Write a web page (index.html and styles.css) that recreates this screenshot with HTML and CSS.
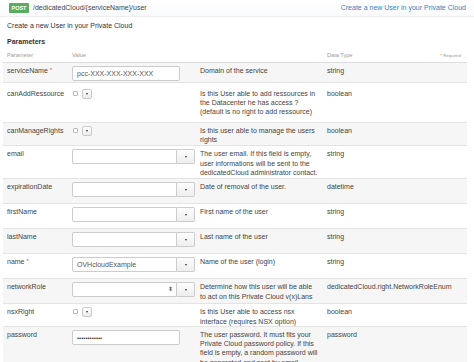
FILE: index.html
```html
<!DOCTYPE html>
<html>
<head>
  <meta name="viewport" content="width=device-width, initial-scale=1.0">
  <title>POST /dedicatedCloud/{serviceName}/user</title>
  <link rel="stylesheet" href="styles.css">
</head>
<body>
  <div class="op-bar">
    <span class="verb">POST</span>
    <span class="path">/dedicatedCloud/{serviceName}/user</span>
    <a class="op-link" href="#">Create a new User in your Private Cloud</a>
  </div>

  <div class="op-body">
    <p class="summary">Create a new User in your Private Cloud</p>
    <h4>Parameters</h4>

    <table class="params">
      <colgroup>
        <col class="c-name">
        <col class="c-value">
        <col class="c-desc">
        <col class="c-type">
      </colgroup>
      <thead>
        <tr>
          <th>Parameter</th>
          <th>Value</th>
          <th></th>
          <th>Data Type <span class="req"><b>*</b> Required</span></th>
        </tr>
      </thead>
      <tbody>
        <tr>
          <td>serviceName <b class="star">*</b></td>
          <td><div class="field field-short">pcc-XXX-XXX-XXX-XXX</div></td>
          <td>Domain of the service</td>
          <td>string</td>
        </tr>
        <tr class="tall">
          <td>canAddRessource</td>
          <td><span class="check"></span><span class="mini-btn"><i class="caret"></i></span></td>
          <td>Is this User able to add ressources in the Datacenter he has access ? (default is no right to add ressource)</td>
          <td>boolean</td>
        </tr>
        <tr>
          <td>canManageRights</td>
          <td><span class="check"></span><span class="mini-btn"><i class="caret"></i></span></td>
          <td>Is this user able to manage the users rights</td>
          <td>boolean</td>
        </tr>
        <tr>
          <td>email</td>
          <td><div class="group"><div class="field"></div><span class="drop"><i class="caret"></i></span></div></td>
          <td>The user email. If this field is empty, user informations will be sent to the dedicatedCloud administrator contact.</td>
          <td>string</td>
        </tr>
        <tr>
          <td>expirationDate</td>
          <td><div class="group"><div class="field"></div><span class="drop"><i class="caret"></i></span></div></td>
          <td>Date of removal of the user.</td>
          <td>datetime</td>
        </tr>
        <tr>
          <td>firstName</td>
          <td><div class="group"><div class="field"></div><span class="drop"><i class="caret"></i></span></div></td>
          <td>First name of the user</td>
          <td>string</td>
        </tr>
        <tr>
          <td>lastName</td>
          <td><div class="group"><div class="field"></div><span class="drop"><i class="caret"></i></span></div></td>
          <td>Last name of the user</td>
          <td>string</td>
        </tr>
        <tr>
          <td>name <b class="star">*</b></td>
          <td><div class="group"><div class="field">OVHcloudExample</div><span class="drop"><i class="caret"></i></span></div></td>
          <td>Name of the user (login)</td>
          <td>string</td>
        </tr>
        <tr>
          <td>networkRole</td>
          <td><div class="group"><div class="field field-select"><span class="updown">&#x2B0D;</span></div><span class="drop"><i class="caret"></i></span></div></td>
          <td>Determine how this user will be able to act on this Private Cloud v(x)Lans</td>
          <td>dedicatedCloud.right.NetworkRoleEnum</td>
        </tr>
        <tr class="short">
          <td>nsxRight</td>
          <td><span class="check"></span><span class="mini-btn"><i class="caret"></i></span></td>
          <td>Is this User able to access nsx interface (requires NSX option)</td>
          <td>boolean</td>
        </tr>
        <tr>
          <td>password</td>
          <td><div class="field field-short"><span class="dots">&bull;&bull;&bull;&bull;&bull;&bull;&bull;&bull;&bull;&bull;&bull;&bull;</span></div></td>
          <td>The user password. It must fits your Private Cloud password policy. If this field is empty, a random password will be generated and sent by email.</td>
          <td>password</td>
        </tr>
      </tbody>
    </table>
  </div>
</body>
</html>
```

FILE: styles.css
```css
html {
  background-color: #ffffff;
}
body {
  margin: 0;
  font-family: "Liberation Sans", Arial, Helvetica, sans-serif;
  font-size: 7px;
  line-height: 9.3px;
  color: #333333;
  overflow: hidden;
}

/* operation bar */
.op-bar {
  display: flex;
  align-items: center;
  height: 16px;
  padding: 0 8px 0 9px;
  background: linear-gradient(#ffffff, #f9fafb);
  border-bottom: 1px solid #eceef0;
}
.verb {
  width: 20px;
  height: 10px;
  line-height: 10px;
  margin-right: 4px;
  text-align: center;
  font-size: 5.5px;
  font-weight: bold;
  color: #ffffff;
  background-color: #58ad62;
  border-radius: 1px;
}
.path {
  color: #444444;
}
.op-link {
  margin-left: auto;
  color: #3a84c2;
  text-decoration: none;
}

/* body */
.op-body {
  padding: 0 7px 0 3px;
}
.summary {
  margin: 4px 0 0 4px;
}
h4 {
  margin: 7px 0 0 4px;
  font-size: 7px;
  font-weight: bold;
  color: #333333;
}

/* parameters table */
.params {
  width: 464px;
  margin-top: 1px;
  border-collapse: collapse;
  table-layout: fixed;
}
.c-name { width: 65px; }
.c-value { width: 128px; }
.c-desc { width: 127px; }
.c-type { width: 144px; }

.params th {
  padding: 3px 4px 2px;
  font-size: 5.6px;
  font-weight: normal;
  text-align: left;
  color: #9a9a9a;
  border-bottom: 1px solid #dddddd;
}
.req {
  float: right;
  margin-right: 2px;
  font-size: 4.4px;
  color: #9a9a9a;
}
.req b {
  font-weight: normal;
  color: #d9534f;
}
.params td {
  padding: 3px 4px 1px;
  vertical-align: top;
  color: #444444;
  border-bottom: 1px solid #e4e4e4;
}
.params td:nth-child(2) {
  padding-right: 1px;
}
.params tbody tr:nth-child(odd) td {
  background-color: #f6f6f6;
}
.params tr.tall td {
  padding-top: 6px;
  padding-bottom: 5px;
}
.params tr.short td {
  padding-bottom: 0;
}
.star {
  font-weight: normal;
  font-size: 6px;
  color: #d9534f;
  vertical-align: top;
}

/* inputs */
.field {
  box-sizing: border-box;
  height: 15px;
  padding: 0 4px;
  line-height: 13px;
  color: #555555;
  background: #ffffff;
  border: 1px solid #cccccc;
  border-radius: 2px;
}
.field-short {
  width: 108px;
}
.group {
  display: flex;
  width: 123px;
  margin-bottom: 5px;
}
.group .field {
  flex: 1;
  border-radius: 2px 0 0 2px;
}
.field-select {
  display: flex;
  justify-content: flex-end;
}
.updown {
  font-size: 6px;
  color: #666666;
  margin-right: -1px;
}
.drop {
  box-sizing: border-box;
  display: flex;
  align-items: center;
  justify-content: center;
  width: 18px;
  height: 15px;
  background: linear-gradient(#fdfdfd, #eeeeee);
  border: 1px solid #cccccc;
  border-left: none;
  border-radius: 0 2px 2px 0;
}
.caret {
  width: 0;
  height: 0;
  border-left: 1.5px solid transparent;
  border-right: 1.5px solid transparent;
  border-top: 2px solid #333333;
}
.dots {
  font-size: 6px;
  color: #333333;
}

/* checkbox + toggle */
.check {
  display: inline-block;
  box-sizing: border-box;
  width: 5px;
  height: 5px;
  margin: 2px 4px 0 1px;
  vertical-align: top;
  background: #ffffff;
  border: 1px solid #b9b9b9;
  border-radius: 1px;
}
.mini-btn {
  display: inline-flex;
  align-items: center;
  justify-content: center;
  box-sizing: border-box;
  width: 10px;
  height: 10px;
  vertical-align: top;
  background: linear-gradient(#fdfdfd, #ececec);
  border: 1px solid #cccccc;
  border-radius: 2px;
}
```
